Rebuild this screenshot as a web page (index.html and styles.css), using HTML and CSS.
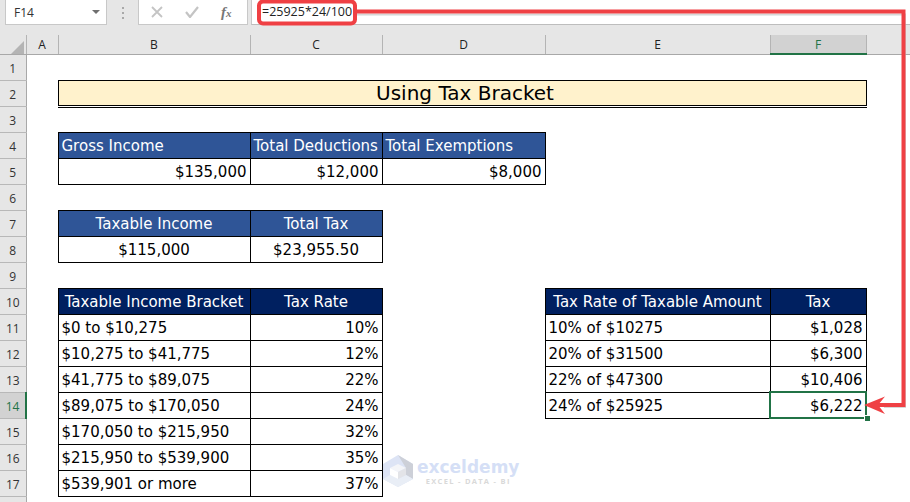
FILE: index.html
```html
<!DOCTYPE html>
<html lang="en">
<head>
<meta charset="utf-8">
<title>Using Tax Bracket</title>
<link rel="stylesheet" href="styles.css">
</head>
<body>
<div class="app">
  <div class="ribbon">
    <div class="namebox"><span>F14</span><svg class="caret" width="8" height="4" viewBox="0 0 8 4"><path d="M0 0h8L4 4z" fill="#6f6f6f"/></svg></div>
    <svg class="grip" width="4" height="12" viewBox="0 0 4 12"><path d="M1 0h2v2H1zM1 5h2v2H1zM1 10h2v2H1z" fill="#a8a8a8"/></svg>
    <div class="fnbtns">
      <svg width="12" height="12" viewBox="0 0 12 12"><path d="M1 1l10 10M11 1L1 11" stroke="#c4c4c4" stroke-width="1.800" fill="none"/></svg>
      <svg width="14" height="12" viewBox="0 0 14 12"><path d="M1 6l4 5 8-10" stroke="#c4c4c4" stroke-width="2.200" fill="none"/></svg>
      <span class="fx">f<i>x</i></span>
    </div>
    <div class="formula">=25925*24/100</div>
  </div>
  <table class="sheet">
    <colgroup><col class="c0"><col class="ca"><col class="cb"><col class="cc"><col class="cd"><col class="ce"><col class="cf"><col></colgroup>
    <thead>
      <tr><th class="corner"><svg width="13" height="13" viewBox="0 0 13 13"><path d="M13 0v13H0z" fill="#b4b4b4"/></svg></th><th>A</th><th>B</th><th>C</th><th>D</th><th>E</th><th class="sel">F</th><th class="last"></th></tr>
    </thead>
    <tbody>
      <tr><th>1</th><td colspan="7"></td></tr>
      <tr><th>2</th><td></td><td colspan="5" class="title">Using Tax Bracket</td><td></td></tr>
      <tr><th>3</th><td colspan="7"></td></tr>
      <tr><th>4</th><td></td><td class="box blue">Gross Income</td><td class="box blue">Total Deductions</td><td class="box blue">Total Exemptions</td><td colspan="3"></td></tr>
      <tr><th>5</th><td></td><td class="box num">$135,000</td><td class="box num">$12,000</td><td class="box num">$8,000</td><td colspan="3"></td></tr>
      <tr><th>6</th><td colspan="7"></td></tr>
      <tr><th>7</th><td></td><td class="box blue mid">Taxable Income</td><td class="box blue mid">Total Tax</td><td colspan="4"></td></tr>
      <tr><th>8</th><td></td><td class="box mid">$115,000</td><td class="box mid">$23,955.50</td><td colspan="4"></td></tr>
      <tr><th>9</th><td colspan="7"></td></tr>
      <tr><th>10</th><td></td><td class="box navy mid">Taxable Income Bracket</td><td class="box navy mid">Tax Rate</td><td></td><td class="box navy mid">Tax Rate of Taxable Amount</td><td class="box navy mid">Tax</td><td></td></tr>
      <tr><th>11</th><td></td><td class="box">$0 to $10,275</td><td class="box num">10%</td><td></td><td class="box">10% of $10275</td><td class="box num">$1,028</td><td></td></tr>
      <tr><th>12</th><td></td><td class="box">$10,275 to $41,775</td><td class="box num">12%</td><td></td><td class="box">20% of $31500</td><td class="box num">$6,300</td><td></td></tr>
      <tr><th>13</th><td></td><td class="box">$41,775 to $89,075</td><td class="box num">22%</td><td></td><td class="box">22% of $47300</td><td class="box num">$10,406</td><td></td></tr>
      <tr><th class="sel-row">14</th><td></td><td class="box">$89,075 to $170,050</td><td class="box num">24%</td><td></td><td class="box">24% of $25925</td><td class="box num active">$6,222<span class="handle"></span></td><td></td></tr>
      <tr><th>15</th><td></td><td class="box">$170,050 to $215,950</td><td class="box num">32%</td><td colspan="4"></td></tr>
      <tr><th>16</th><td></td><td class="box">$215,950 to $539,900</td><td class="box num">35%</td><td colspan="4"></td></tr>
      <tr><th>17</th><td></td><td class="box">$539,901 or more</td><td class="box num">37%</td><td colspan="4"></td></tr>
      <tr><th></th><td colspan="7"></td></tr>
    </tbody>
  </table>
  <svg class="callout" width="910" height="502" viewBox="0 0 910 502">
    <path class="shadow" d="M357 14.500H905V407H884"/>
    <rect class="ring" x="259" y="1.500" width="96" height="22" rx="4"/>
    <path class="line" d="M355 11.500H903.500V405H878"/>
    <path class="head" d="M864 405L885 396.500L878 405L885 414z"/>
  </svg>
  <div class="mark">
    <svg width="30" height="32" viewBox="0 0 30 32">
      <path d="M15 0L30 9v15L15 32 0 24V9z" fill="#dde4f5"/>
      <path d="M15 0L30 9v15l-7-4v-7z" fill="#cdd0d8"/>
      <path d="M0 24l7-4 8 4 8-4 7 4-15 8z" fill="#e9eef6"/>
      <path d="M15 9l8 4-8 4-8-4z" fill="#f4f5f8"/>
      <path d="M7 13l8 4v7l-8-4z" fill="#fff"/>
      <path d="M23 13l-8 4v7l8-4z" fill="#e3e4e8"/>
    </svg>
    <div class="brand"><b>exceldemy</b><small>EXCEL - DATA - BI</small></div>
  </div>
</div>
</body>
</html>
```
FILE: styles.css
```css
* { box-sizing: border-box; }
html, body { margin: 0; height: 100%; }
body { overflow: hidden; background: #fff; }
.app { position: relative; width: 910px; height: 502px; overflow: hidden; font-family: "DejaVu Sans", sans-serif; }

.ribbon { display: flex; align-items: stretch; height: 35px; padding: 0 0 10px 5px; background: #e6e6e6; }
.namebox { display: flex; align-items: center; justify-content: space-between; width: 102px; padding: 0 6px 0 8px; background: #fff; border: 1px solid #c8c8c8; border-top: 0; font: 12px "Open Sans", sans-serif; color: #333; }
.grip { align-self: center; margin: 0 13px 0 14px; }
.fnbtns { display: flex; align-items: center; gap: 22px; width: 110px; padding: 0 10px 0 12px; background: #fff; border: 1px solid #c8c8c8; border-top: 0; }
.fx { font: italic bold 15px "Liberation Serif", serif; color: #777; }
.fx i { font-size: 11px; }
.formula { flex: 1; margin-left: 3px; padding: 3px 0 0 10px; background: #fff; border-left: 1px solid #c8c8c8; border-bottom: 1px solid #bdbdbd; font: 12.500px "Open Sans", sans-serif; color: #222; }

.sheet { table-layout: fixed; width: 910px; border-collapse: collapse; border-spacing: 0; }
.c0 { width: 26px; } .ca { width: 32px; } .cb { width: 192px; } .cc { width: 132px; } .cd { width: 163px; } .ce { width: 225px; } .cf { width: 96px; }
.sheet tr { height: 26px; }
.sheet thead tr { height: 19px; }
.sheet th { padding: 0; background: #e6e6e6; font: 12px "Open Sans", sans-serif; color: #222; overflow: hidden; }
.sheet thead th { border-right: 1px solid #b4b4b4; border-bottom: 1px solid #a8a8a8; }
.sheet thead .corner { text-align: right; padding: 3px 2px 0 0; line-height: 0; vertical-align: bottom; }
.sheet thead .last { border-right: 0; }
.sheet thead .sel { background: #d2d2d2; color: #217346; border-bottom: 2px solid #217346; }
.sheet tbody th { border-right: 1px solid #a8a8a8; border-bottom: 1px solid #b8b8b8; padding-top: 2px; color: #333; }
.sheet tbody th.sel-row { background: #d2d2d2; color: #217346; border-right: 2px solid #217346; }
.sheet td { padding: 1px 3px 0; font-size: 15px; white-space: nowrap; color: #000; overflow: hidden; }

.box { border: 1px solid #000; }
.num { text-align: right; }
.mid { text-align: center; }
.blue { background: #2f5597; color: #fff !important; }
.navy { background: #002060; color: #fff !important; }
.sheet td.title { padding: 0 3px 0 9px; background: #fff2cc; border: 1px solid #000; border-bottom: 3px double #000; text-align: center; font-size: 20px; }
.sheet td.active { position: relative; overflow: visible; outline: 2px solid #217346; outline-offset: -1px; }
.handle { position: absolute; right: -4px; bottom: -3px; width: 6px; height: 6px; background: #217346; border: 1px solid #fff; border-width: 1px 0 0 1px; }

.callout { position: absolute; left: 0; top: 0; pointer-events: none; }
.ring, .line, .shadow { fill: none; stroke-width: 4; }
.ring { stroke: #ef4044; }
.line { stroke: #ef4044; }
.shadow { stroke: #bdbdbd; stroke-width: 2; opacity: .6; }
.head { fill: #ef4044; }

.mark { position: absolute; left: 383px; top: 455px; display: flex; gap: 4px; pointer-events: none; }
.brand { display: flex; flex-direction: column; align-items: center; padding-top: 2px; }
.brand b { font: bold 17px/21px "DejaVu Sans", sans-serif; color: #d5dff6; }
.brand small { font: bold 7.500px/7px "Open Sans", sans-serif; letter-spacing: 1.300px; color: #d9d9d9; }
```
